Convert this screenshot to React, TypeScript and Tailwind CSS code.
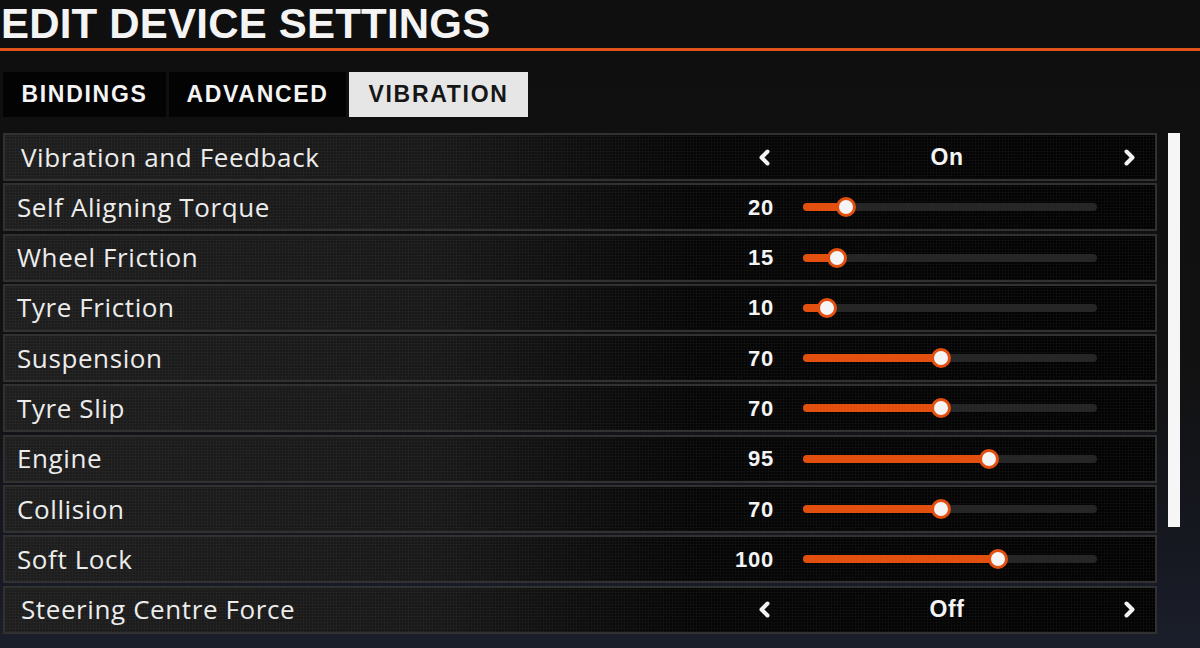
import React from "react";

type Row =
  | { label: string; kind: "select"; value: string }
  | { label: string; kind: "slider"; value: number };

const rows: Row[] = [
  { label: "Vibration and Feedback", kind: "select", value: "On" },
  { label: "Self Aligning Torque", kind: "slider", value: 20 },
  { label: "Wheel Friction", kind: "slider", value: 15 },
  { label: "Tyre Friction", kind: "slider", value: 10 },
  { label: "Suspension", kind: "slider", value: 70 },
  { label: "Tyre Slip", kind: "slider", value: 70 },
  { label: "Engine", kind: "slider", value: 95 },
  { label: "Collision", kind: "slider", value: 70 },
  { label: "Soft Lock", kind: "slider", value: 100 },
  { label: "Steering Centre Force", kind: "select", value: "Off" },
];

function Chevron({ dir }: { dir: "left" | "right" }) {
  return (
    <svg width="15" height="17" viewBox="0 0 15 17" className="shrink-0">
      <path
        d={dir === "left" ? "M10.5 2.5 L4.5 8.5 L10.5 14.5" : "M4.5 2.5 L10.5 8.5 L4.5 14.5"}
        fill="none"
        stroke="#f2f2f2"
        strokeWidth="4"
        strokeLinecap="round"
        strokeLinejoin="round"
      />
    </svg>
  );
}

function Slider({ value }: { value: number }) {
  // track holds 0..150, thumb centre 5px in from the start
  const centre = 5 + value * 1.9;
  return (
    <div className="relative w-[294px] h-[8px] rounded-full bg-[#262626]">
      <div
        className="absolute left-0 top-0 h-full rounded-full bg-[#e24f0f]"
        style={{ width: centre }}
      />
      <div
        className="absolute top-1/2 -translate-y-1/2 w-[20px] h-[20px] rounded-full bg-[#f5f5f5] border-[3px] border-[#e24f0f]"
        style={{ left: centre - 10 }}
      />
    </div>
  );
}

export default function App() {
  return (
    <div className="w-[1200px] h-[648px] overflow-hidden bg-[linear-gradient(180deg,#0f0f0f_0%,#111111_55%,#161821_85%,#1b1f2b_100%)] text-white">
      <div className="h-[48px] pt-[3px] pl-[1px]">
        <h1 className="text-[42px] leading-[42px] font-bold text-[#f4f4f4] font-['Liberation_Sans',Arial,sans-serif] tracking-[0.2px]">
          EDIT DEVICE SETTINGS
        </h1>
      </div>
      <div className="h-[3px] bg-[#e0541c]" />

      <div className="mt-[21px] pl-[3px] flex gap-[3px] font-['Liberation_Sans',Arial,sans-serif] font-bold text-[23px] tracking-[1.7px]">
        <div className="w-[163px] h-[45px] flex items-center justify-center bg-[#030303] text-[#f4f4f4]">
          BINDINGS
        </div>
        <div className="w-[177px] h-[45px] flex items-center justify-center bg-[#030303] text-[#f4f4f4]">
          ADVANCED
        </div>
        <div className="w-[179px] h-[45px] flex items-center justify-center bg-[#e6e6e6] text-[#161616]">
          VIBRATION
        </div>
      </div>

      <div className="mt-[16px] pl-[3px] flex items-start">
        <div className="w-[1154px] flex flex-col gap-[2.3px]">
          {rows.map((r) => (
            <div
              key={r.label}
              className="h-[48px] flex items-center border-2 border-[#313131] bg-[image:radial-gradient(circle,rgba(255,255,255,0.06)_0.8px,transparent_1.1px),linear-gradient(90deg,#1e1e1e_0%,#181818_38%,#060606_60%,#030303_100%)] bg-[length:3px_3px,100%_100%]"
            >
              <div
                className={
                  "flex-1 text-[26px] tracking-[0.6px] text-[#ececec] font-['Open_Sans',sans-serif] " +
                  (r.kind === "select" ? "pl-[16px]" : "pl-[12px]")
                }
              >
                {r.label}
              </div>
              {r.kind === "slider" ? (
                <>
                  <div className="w-[60px] text-right font-['Liberation_Sans',Arial,sans-serif] font-bold text-[22px] tracking-[0.8px] text-[#f4f4f4]">
                    {r.value}
                  </div>
                  <div className="ml-[29px] mr-[58px]">
                    <Slider value={r.value} />
                  </div>
                </>
              ) : (
                <div className="w-[380px] mr-[18px] flex items-center">
                  <Chevron dir="left" />
                  <div className="flex-1 text-center font-['Liberation_Sans',Arial,sans-serif] font-bold text-[23px] tracking-[0.6px] text-[#f4f4f4]">
                    {r.value}
                  </div>
                  <Chevron dir="right" />
                </div>
              )}
            </div>
          ))}
        </div>
        <div className="ml-[11px] w-[12px] h-[394px] bg-[#f6f6f6]" />
      </div>
    </div>
  );
}
